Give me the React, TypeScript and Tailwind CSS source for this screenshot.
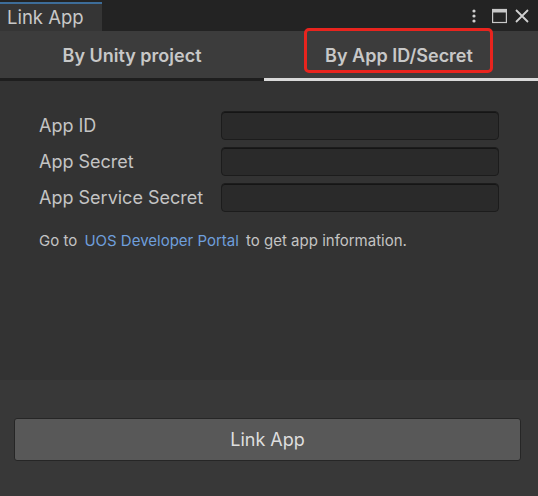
import React from "react";

const font = { fontFamily: "Inter, 'Noto Sans', sans-serif" };

function Field({ label }: { label: string }) {
  return (
    <div className="flex h-[36px] items-center">
      <span className="w-[182px] text-[18px] text-[#c4c4c4]">{label}</span>
      <div className="h-[29px] w-[278px] rounded-[4px] border border-[#1c1c1c] bg-[#2a2a2a] shadow-[inset_0_1px_0_#151515]" />
    </div>
  );
}

export default function App() {
  return (
    <div className="relative flex h-[496px] w-[538px] flex-col bg-[#333333]" style={font}>
      {/* title bar */}
      <div className="flex h-[31px] items-end bg-[#232323]">
        <div className="flex h-[29px] w-[102px] items-center border-t-2 border-[#3d6d99] bg-[#353535] pl-[7px] text-[18.5px] text-[#c8c8c8]">
          Link App
        </div>
        <div className="flex h-[31px] flex-1 items-center justify-end pr-[8px]">
          <svg width="6" height="16" viewBox="0 0 6 16">
            <circle cx="3" cy="3" r="1.6" fill="#d0d0d0" />
            <circle cx="3" cy="8" r="1.6" fill="#d0d0d0" />
            <circle cx="3" cy="13" r="1.6" fill="#d0d0d0" />
          </svg>
          <svg className="ml-[15px]" width="15" height="16" viewBox="0 0 15 16">
            <rect x="0.6" y="1.5" width="13.8" height="13" fill="none" stroke="#c8c8c8" strokeWidth="1.2" />
            <rect x="0.6" y="1.5" width="13.8" height="3" fill="#c8c8c8" />
          </svg>
          <svg className="ml-[7px]" width="16" height="16" viewBox="0 0 16 16">
            <path d="M2 2 L14 14 M14 2 L2 14" stroke="#d0d0d0" strokeWidth="1.8" />
          </svg>
        </div>
      </div>

      {/* tabs */}
      <div className="flex h-[50px] bg-[#3c3c3c]">
        <div className="flex w-[264px] flex-col">
          <div className="flex flex-1 items-center justify-center pt-[2px] text-[18px] font-semibold text-[#c8c8c8]">
            By Unity project
          </div>
          <div className="h-[3px] bg-[#1e1e1e]" />
        </div>
        <div className="flex flex-1 flex-col">
          <div className="flex flex-1 items-center justify-center pt-[2px] pr-[4px] text-[18px] font-semibold text-[#c8c8c8]">
            By App ID/Secret
          </div>
          <div className="h-[3px] bg-[#d9d9d9]" />
        </div>
      </div>

      {/* annotation */}
      <div className="absolute left-[304px] top-[28px] h-[45px] w-[189px] rounded-[5px] border-[3px] border-[#e8241e]" />

      {/* form */}
      <div className="flex flex-1 flex-col px-[39px] pt-[26px]">
        <Field label="App ID" />
        <Field label="App Secret" />
        <Field label="App Service Secret" />
        <p className="mt-[15px] text-[15px] text-[#c4c4c4]">
          Go to <span className="mx-[3px] text-[#6f9fdc]">UOS Developer Portal</span> to get app information.
        </p>
      </div>

      {/* footer */}
      <div className="flex h-[116px] items-center bg-[#383838] px-[14px] pt-[3px]">
        <button className="h-[43px] w-[507px] rounded-[3px] border border-[#262626] bg-[#585858] text-[18px] text-[#dedede]">
          Link App
        </button>
      </div>
    </div>
  );
}
